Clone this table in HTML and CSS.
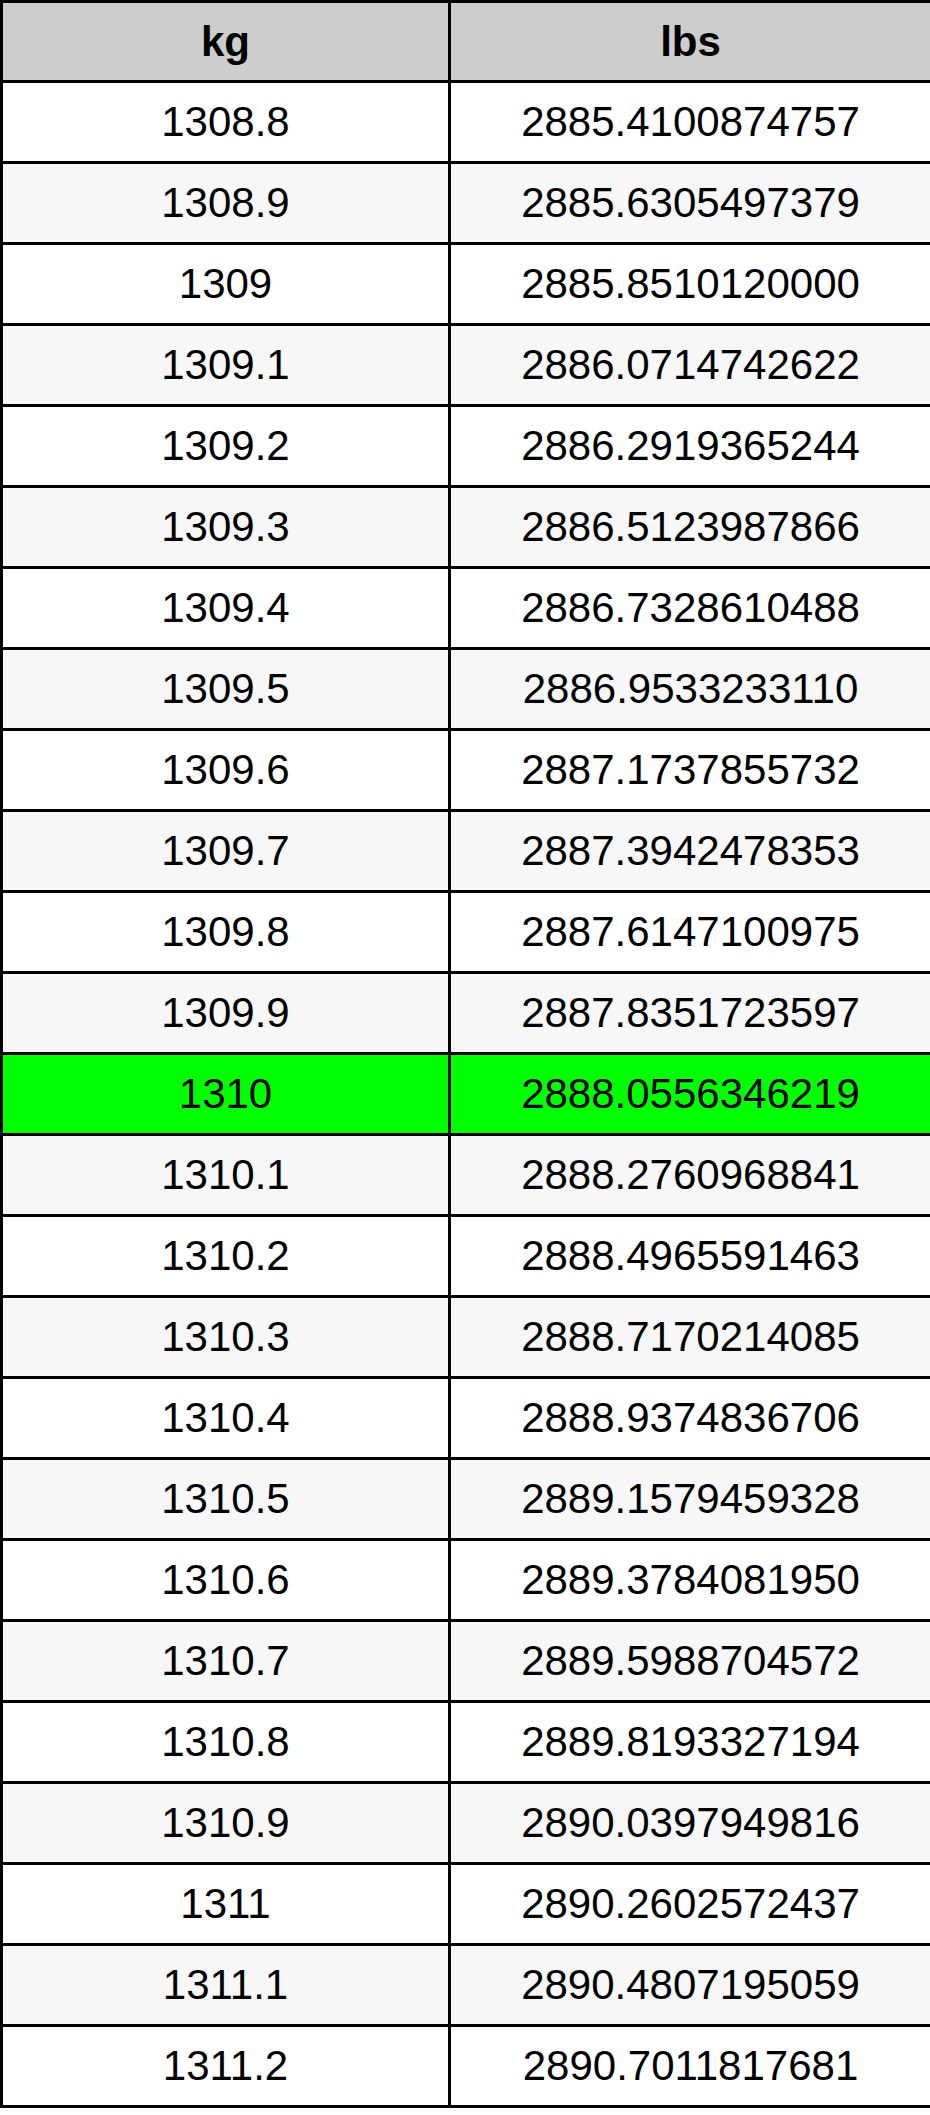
FILE: index.html
```html
<!DOCTYPE html>
<html lang="en">
<head>
<meta charset="utf-8">
<title>kg to lbs</title>
<link rel="stylesheet" href="styles.css">
</head>
<body>
<table class="conv">
<colgroup><col class="c-kg"><col class="c-lbs"></colgroup>
<thead>
<tr><th>kg</th><th>lbs</th></tr>
</thead>
<tbody>
<tr><td>1308.8</td><td>2885.4100874757</td></tr>
<tr class="alt"><td>1308.9</td><td>2885.6305497379</td></tr>
<tr><td>1309</td><td>2885.8510120000</td></tr>
<tr class="alt"><td>1309.1</td><td>2886.0714742622</td></tr>
<tr><td>1309.2</td><td>2886.2919365244</td></tr>
<tr class="alt"><td>1309.3</td><td>2886.5123987866</td></tr>
<tr><td>1309.4</td><td>2886.7328610488</td></tr>
<tr class="alt"><td>1309.5</td><td>2886.9533233110</td></tr>
<tr><td>1309.6</td><td>2887.1737855732</td></tr>
<tr class="alt"><td>1309.7</td><td>2887.3942478353</td></tr>
<tr><td>1309.8</td><td>2887.6147100975</td></tr>
<tr class="alt"><td>1309.9</td><td>2887.8351723597</td></tr>
<tr class="hl"><td>1310</td><td>2888.0556346219</td></tr>
<tr class="alt"><td>1310.1</td><td>2888.2760968841</td></tr>
<tr><td>1310.2</td><td>2888.4965591463</td></tr>
<tr class="alt"><td>1310.3</td><td>2888.7170214085</td></tr>
<tr><td>1310.4</td><td>2888.9374836706</td></tr>
<tr class="alt"><td>1310.5</td><td>2889.1579459328</td></tr>
<tr><td>1310.6</td><td>2889.3784081950</td></tr>
<tr class="alt"><td>1310.7</td><td>2889.5988704572</td></tr>
<tr><td>1310.8</td><td>2889.8193327194</td></tr>
<tr class="alt"><td>1310.9</td><td>2890.0397949816</td></tr>
<tr><td>1311</td><td>2890.2602572437</td></tr>
<tr class="alt"><td>1311.1</td><td>2890.4807195059</td></tr>
<tr><td>1311.2</td><td>2890.7011817681</td></tr>
</tbody>
</table>
</body>
</html>
```
FILE: styles.css
```css
html, body {
  margin: 0;
  padding: 0;
  background: #ffffff;
}

.conv {
  width: 930px;
  border-collapse: collapse;
  table-layout: fixed;
  border: 3px solid #000000;
  font-family: "Liberation Sans", Arial, sans-serif;
  font-size: 42px;
  color: #000000;
}

.c-kg { width: 448px; }
.c-lbs { width: 482px; }

.conv th,
.conv td {
  border: 3px solid #000000;
  padding: 0;
  height: 78px;
  text-align: center;
  vertical-align: middle;
  line-height: 1;
}

.conv th {
  background: #cdcdcd;
  font-weight: bold;
  height: 77px;
}

.conv td {
  background: #ffffff;
  font-weight: normal;
}

.conv tr.alt td {
  background: #f7f7f7;
}

.conv tr.hl td {
  background: #00ff00;
}
```
